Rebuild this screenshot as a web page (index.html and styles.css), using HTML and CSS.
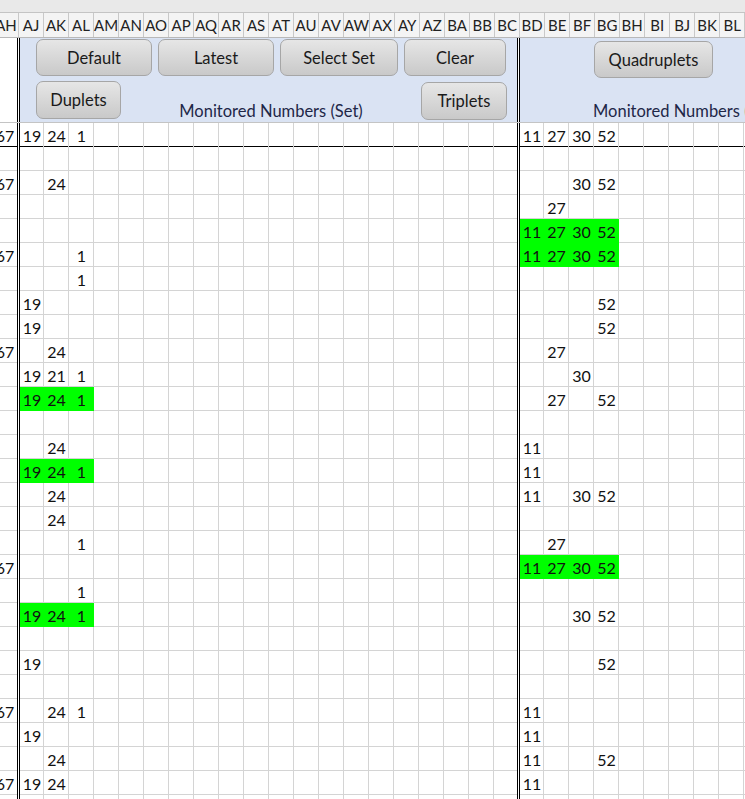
FILE: index.html
```html
<!DOCTYPE html>
<html><head>
<title>Monitored Numbers</title>
<meta name="viewport" content="width=device-width, initial-scale=1">
<link rel="stylesheet" href="styles.css">
</head><body>
<div class="topbar"></div>
<div class="colhead">
<span>AH</span><span>AJ</span><span>AK</span><span>AL</span><span>AM</span><span>AN</span><span>AO</span><span>AP</span><span>AQ</span><span>AR</span><span>AS</span><span>AT</span><span>AU</span><span>AV</span><span>AW</span><span>AX</span><span>AY</span><span>AZ</span><span>BA</span><span>BB</span><span>BC</span><span>BD</span><span>BE</span><span>BF</span><span>BG</span><span>BH</span><span>BI</span><span>BJ</span><span>BK</span><span>BL</span><span>BM</span>
</div>

<div class="prow">
  <div class="ah"></div><i class="sep"></i>
  <div class="panel left">
    <div class="btns">
      <button class="b-default">Default</button>
      <button class="b-latest">Latest</button>
      <button class="b-select">Select Set</button>
      <button class="b-clear">Clear</button>
    </div>
    <div class="btns2">
      <button class="b-duplets">Duplets</button>
      <div class="label">Monitored Numbers (Set)</div>
      <button class="b-triplets">Triplets</button>
    </div>
  </div>
  <i class="sep"></i>
  <div class="panel right">
    <button class="b-quad">Quadruplets</button>
    <div class="label">Monitored Numbers (Set)</div>
  </div>
</div>

<div class="row first"><div class="ah">67</div><i class="sep"></i><div class="blk left"><span class="k1">19</span><span class="k2">24</span><span class="k3">1</span></div><i class="sep"></i><div class="blk"><span class="k1">11</span><span class="k2">27</span><span class="k3">30</span><span class="k4">52</span></div></div>
<div class="row"><div class="ah"></div><i class="sep"></i><div class="blk left"></div><i class="sep"></i><div class="blk"></div></div>
<div class="row"><div class="ah">67</div><i class="sep"></i><div class="blk left"><span class="k2">24</span></div><i class="sep"></i><div class="blk"><span class="k3">30</span><span class="k4">52</span></div></div>
<div class="row"><div class="ah"></div><i class="sep"></i><div class="blk left"></div><i class="sep"></i><div class="blk"><span class="k2">27</span></div></div>
<div class="row"><div class="ah"></div><i class="sep"></i><div class="blk left"></div><i class="sep"></i><div class="blk"><span class="k1 g">11</span><span class="k2 g">27</span><span class="k3 g">30</span><span class="k4 g">52</span></div></div>
<div class="row"><div class="ah">67</div><i class="sep"></i><div class="blk left"><span class="k3">1</span></div><i class="sep"></i><div class="blk"><span class="k1 g">11</span><span class="k2 g">27</span><span class="k3 g">30</span><span class="k4 g">52</span></div></div>
<div class="row"><div class="ah"></div><i class="sep"></i><div class="blk left"><span class="k3">1</span></div><i class="sep"></i><div class="blk"></div></div>
<div class="row"><div class="ah"></div><i class="sep"></i><div class="blk left"><span class="k1">19</span></div><i class="sep"></i><div class="blk"><span class="k4">52</span></div></div>
<div class="row"><div class="ah"></div><i class="sep"></i><div class="blk left"><span class="k1">19</span></div><i class="sep"></i><div class="blk"><span class="k4">52</span></div></div>
<div class="row"><div class="ah">67</div><i class="sep"></i><div class="blk left"><span class="k2">24</span></div><i class="sep"></i><div class="blk"><span class="k2">27</span></div></div>
<div class="row"><div class="ah"></div><i class="sep"></i><div class="blk left"><span class="k1">19</span><span class="k2">21</span><span class="k3">1</span></div><i class="sep"></i><div class="blk"><span class="k3">30</span></div></div>
<div class="row"><div class="ah"></div><i class="sep"></i><div class="blk left"><span class="k1 g">19</span><span class="k2 g">24</span><span class="k3 g">1</span></div><i class="sep"></i><div class="blk"><span class="k2">27</span><span class="k4">52</span></div></div>
<div class="row"><div class="ah"></div><i class="sep"></i><div class="blk left"></div><i class="sep"></i><div class="blk"></div></div>
<div class="row"><div class="ah"></div><i class="sep"></i><div class="blk left"><span class="k2">24</span></div><i class="sep"></i><div class="blk"><span class="k1">11</span></div></div>
<div class="row"><div class="ah"></div><i class="sep"></i><div class="blk left"><span class="k1 g">19</span><span class="k2 g">24</span><span class="k3 g">1</span></div><i class="sep"></i><div class="blk"><span class="k1">11</span></div></div>
<div class="row"><div class="ah"></div><i class="sep"></i><div class="blk left"><span class="k2">24</span></div><i class="sep"></i><div class="blk"><span class="k1">11</span><span class="k3">30</span><span class="k4">52</span></div></div>
<div class="row"><div class="ah"></div><i class="sep"></i><div class="blk left"><span class="k2">24</span></div><i class="sep"></i><div class="blk"></div></div>
<div class="row"><div class="ah"></div><i class="sep"></i><div class="blk left"><span class="k3">1</span></div><i class="sep"></i><div class="blk"><span class="k2">27</span></div></div>
<div class="row"><div class="ah">67</div><i class="sep"></i><div class="blk left"></div><i class="sep"></i><div class="blk"><span class="k1 g">11</span><span class="k2 g">27</span><span class="k3 g">30</span><span class="k4 g">52</span></div></div>
<div class="row"><div class="ah"></div><i class="sep"></i><div class="blk left"><span class="k3">1</span></div><i class="sep"></i><div class="blk"></div></div>
<div class="row"><div class="ah"></div><i class="sep"></i><div class="blk left"><span class="k1 g">19</span><span class="k2 g">24</span><span class="k3 g">1</span></div><i class="sep"></i><div class="blk"><span class="k3">30</span><span class="k4">52</span></div></div>
<div class="row"><div class="ah"></div><i class="sep"></i><div class="blk left"></div><i class="sep"></i><div class="blk"></div></div>
<div class="row"><div class="ah"></div><i class="sep"></i><div class="blk left"><span class="k1">19</span></div><i class="sep"></i><div class="blk"><span class="k4">52</span></div></div>
<div class="row"><div class="ah"></div><i class="sep"></i><div class="blk left"></div><i class="sep"></i><div class="blk"></div></div>
<div class="row"><div class="ah">67</div><i class="sep"></i><div class="blk left"><span class="k2">24</span><span class="k3">1</span></div><i class="sep"></i><div class="blk"><span class="k1">11</span></div></div>
<div class="row"><div class="ah"></div><i class="sep"></i><div class="blk left"><span class="k1">19</span></div><i class="sep"></i><div class="blk"><span class="k1">11</span></div></div>
<div class="row"><div class="ah"></div><i class="sep"></i><div class="blk left"><span class="k2">24</span></div><i class="sep"></i><div class="blk"><span class="k1">11</span><span class="k4">52</span></div></div>
<div class="row"><div class="ah">67</div><i class="sep"></i><div class="blk left"><span class="k1">19</span><span class="k2">24</span></div><i class="sep"></i><div class="blk"><span class="k1">11</span></div></div>
<div class="row"><div class="ah"></div><i class="sep"></i><div class="blk left"></div><i class="sep"></i><div class="blk"></div></div>
</body></html>
```

FILE: styles.css
```css
* { box-sizing: border-box; }
body { margin: 0; width: 745px; height: 799px; overflow: hidden; background: #fff; font-family: Lato, "Open Sans", sans-serif; color: #111; }

.topbar { height: 13px; background: #e9e9e9; border-bottom: 1px solid #c4c4c4; }
.colhead { display: flex; height: 25px; margin-left: -6px; background: #f4f4f4; border-bottom: 1px solid #b8b8b8; }
.colhead span { flex: 0 0 25px; display: flex; justify-content: center; align-items: center; border-right: 1px solid #c9c9c9; font-size: 15px; color: #222; white-space: nowrap; }

.prow { display: flex; height: 85px; margin-left: -7px; border-bottom: 1px solid #c4c4c4; }
.row { display: flex; height: 24px; margin-left: -7px; background: linear-gradient(to top, #d4d4d4 1px, transparent 1px); }
.row.first { background: linear-gradient(to top, #000 1px, transparent 1px); }

.ah { flex: 0 0 24px; display: flex; justify-content: center; align-items: center; font-size: 16px; white-space: nowrap; }
.sep { flex: 0 0 3px; border-left: 1px solid #000; border-right: 1px solid #000; background: #fff; }

.blk { flex: 1 0 0; display: grid; grid-template-columns: 24px repeat(19, 25px); overflow: hidden; background: repeating-linear-gradient(90deg, transparent 0 23px, #d4d4d4 23px 24px, transparent 24px 25px); }
.blk.left { flex: 0 0 497px; }
.blk span { grid-row: 1; height: 24px; display: flex; justify-content: center; align-items: center; font-size: 16px; }
.k1 { grid-column: 1; }
.k2 { grid-column: 2; }
.k3 { grid-column: 3; }
.k4 { grid-column: 4; }
.g { background: #00ff00; }

.panel { background: #dae3f3; display: flex; flex-direction: column; }
.panel.left { flex: 0 0 497px; padding: 1px 10px 0 16px; }
.panel.right { flex: 1 0 0; padding: 3px 0 0 74px; }

button { height: 37px; padding: 0; border: 1px solid #a6a6a6; border-radius: 7px; background: linear-gradient(#e6e6e6, #c9c9c9); font-family: Lato, "Open Sans", sans-serif; font-size: 16.5px; color: #1a1a1a; }
.btns { display: flex; gap: 6px; }
.btns2 { flex: 1; display: flex; align-items: flex-start; margin-top: 5px; }
.b-default, .b-latest { width: 116px; }
.b-select { width: 118px; }
.b-clear { width: 102px; }
.b-duplets { width: 85px; height: 38px; }
.b-triplets { width: 86px; height: 38px; margin-top: 1px; }
.b-quad { width: 119px; }

.label { font-size: 16.5px; line-height: 18px; color: #1e2748; white-space: nowrap; }
.btns2 .label { flex: 1; align-self: flex-end; text-align: center; margin-bottom: 2px; }
.panel.right .label { margin-top: auto; margin-bottom: 2px; margin-left: -1px; }
```
